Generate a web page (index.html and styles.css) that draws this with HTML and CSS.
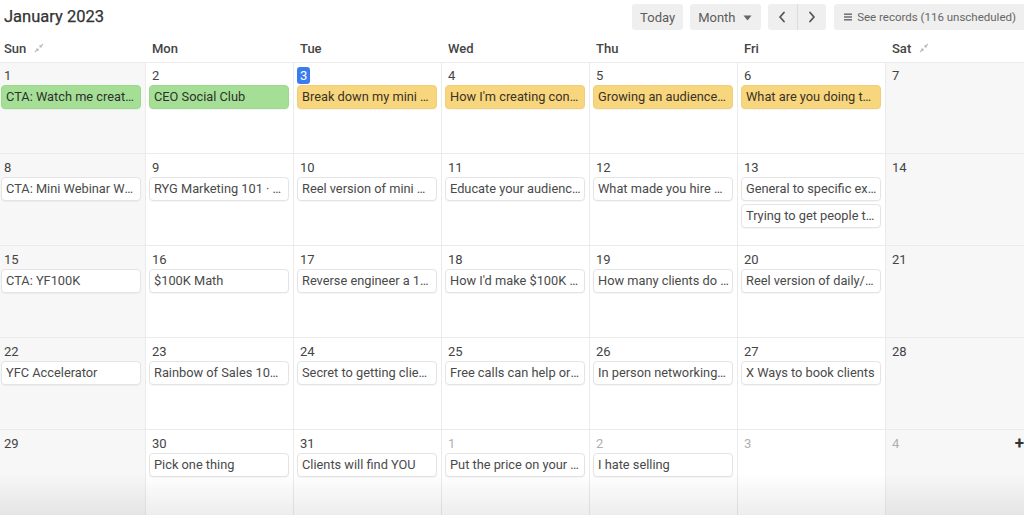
FILE: index.html
```html
<!DOCTYPE html>
<html lang="en">
<head>
<meta charset="utf-8">
<title>January 2023</title>
<link rel="stylesheet" href="styles.css">
</head>
<body>
<div class="app">
  <header class="toolbar">
    <h1 class="title">January 2023</h1>
    <div class="controls">
      <button class="btn btn-today">Today</button>
      <button class="btn btn-month">Month
        <svg class="caret" width="9" height="6" viewBox="0 0 9 6"><path d="M0.5 0.5 H8.5 L4.5 5.5 Z" fill="#666"/></svg>
      </button>
      <div class="nav">
        <button class="nav-btn" aria-label="Previous">
          <svg width="8" height="12" viewBox="0 0 8 12"><path d="M6 1.5 L2 6 L6 10.5" fill="none" stroke="#555" stroke-width="1.8" stroke-linecap="round" stroke-linejoin="round"/></svg>
        </button>
        <span class="nav-divider"></span>
        <button class="nav-btn" aria-label="Next">
          <svg width="8" height="12" viewBox="0 0 8 12"><path d="M2 1.5 L6 6 L2 10.5" fill="none" stroke="#555" stroke-width="1.8" stroke-linecap="round" stroke-linejoin="round"/></svg>
        </button>
      </div>
      <button class="btn btn-records">
        <svg class="list-icon" width="8" height="8" viewBox="0 0 8 8"><rect x="0" y="0.5" width="8" height="1.4" fill="#666"/><rect x="0" y="3.3" width="8" height="1.4" fill="#666"/><rect x="0" y="6.1" width="8" height="1.4" fill="#666"/></svg>
        See records (116 unscheduled)
      </button>
    </div>
  </header>

  <div class="weekdays">
    <div class="weekday">Sun <svg class="shrink" width="10" height="10" viewBox="0 0 10 10"><path d="M1 9 L4 6 M2 6 H4 V8 M9 1 L6 4 M6 2 V4 H8" fill="none" stroke="#bdbdbd" stroke-width="1.1"/></svg></div>
    <div class="weekday">Mon</div>
    <div class="weekday">Tue</div>
    <div class="weekday">Wed</div>
    <div class="weekday">Thu</div>
    <div class="weekday">Fri</div>
    <div class="weekday">Sat <svg class="shrink" width="10" height="10" viewBox="0 0 10 10"><path d="M1 9 L4 6 M2 6 H4 V8 M9 1 L6 4 M6 2 V4 H8" fill="none" stroke="#bdbdbd" stroke-width="1.1"/></svg></div>
  </div>

  <div class="grid">
    <!-- Week 1 -->
    <div class="cell weekend"><div class="date"><span class="num">1</span></div><div class="card green">CTA: Watch me create a mini webinar</div></div>
    <div class="cell"><div class="date"><span class="num">2</span></div><div class="card green">CEO Social Club</div></div>
    <div class="cell"><div class="date"><span class="num today">3</span></div><div class="card yellow">Break down my mini webinar</div></div>
    <div class="cell"><div class="date"><span class="num">4</span></div><div class="card yellow">How I'm creating content</div></div>
    <div class="cell"><div class="date"><span class="num">5</span></div><div class="card yellow">Growing an audience vs clients</div></div>
    <div class="cell"><div class="date"><span class="num">6</span></div><div class="card yellow">What are you doing this year</div></div>
    <div class="cell weekend"><div class="date"><span class="num">7</span></div></div>

    <!-- Week 2 -->
    <div class="cell weekend"><div class="date"><span class="num">8</span></div><div class="card">CTA: Mini Webinar Workshop</div></div>
    <div class="cell"><div class="date"><span class="num">9</span></div><div class="card">RYG Marketing 101 · Part 1</div></div>
    <div class="cell"><div class="date"><span class="num">10</span></div><div class="card">Reel version of mini webinar</div></div>
    <div class="cell"><div class="date"><span class="num">11</span></div><div class="card">Educate your audience first</div></div>
    <div class="cell"><div class="date"><span class="num">12</span></div><div class="card">What made you hire a coach</div></div>
    <div class="cell"><div class="date"><span class="num">13</span></div><div class="card">General to specific examples</div><div class="card">Trying to get people to buy</div></div>
    <div class="cell weekend"><div class="date"><span class="num">14</span></div></div>

    <!-- Week 3 -->
    <div class="cell weekend"><div class="date"><span class="num">15</span></div><div class="card">CTA: YF100K</div></div>
    <div class="cell"><div class="date"><span class="num">16</span></div><div class="card">$100K Math</div></div>
    <div class="cell"><div class="date"><span class="num">17</span></div><div class="card">Reverse engineer a 100K year</div></div>
    <div class="cell"><div class="date"><span class="num">18</span></div><div class="card">How I'd make $100K this year</div></div>
    <div class="cell"><div class="date"><span class="num">19</span></div><div class="card">How many clients do you need</div></div>
    <div class="cell"><div class="date"><span class="num">20</span></div><div class="card">Reel version of daily/weekly math</div></div>
    <div class="cell weekend"><div class="date"><span class="num">21</span></div></div>

    <!-- Week 4 -->
    <div class="cell weekend"><div class="date"><span class="num">22</span></div><div class="card">YFC Accelerator</div></div>
    <div class="cell"><div class="date"><span class="num">23</span></div><div class="card">Rainbow of Sales 101 · Part 1</div></div>
    <div class="cell"><div class="date"><span class="num">24</span></div><div class="card">Secret to getting clients</div></div>
    <div class="cell"><div class="date"><span class="num">25</span></div><div class="card">Free calls can help or hurt</div></div>
    <div class="cell"><div class="date"><span class="num">26</span></div><div class="card">In person networking events</div></div>
    <div class="cell"><div class="date"><span class="num">27</span></div><div class="card">X Ways to book clients</div></div>
    <div class="cell weekend"><div class="date"><span class="num">28</span></div></div>

    <!-- Week 5 -->
    <div class="cell weekend"><div class="date"><span class="num">29</span></div></div>
    <div class="cell"><div class="date"><span class="num">30</span></div><div class="card">Pick one thing</div></div>
    <div class="cell"><div class="date"><span class="num">31</span></div><div class="card">Clients will find YOU</div></div>
    <div class="cell"><div class="date"><span class="num other">1</span></div><div class="card">Put the price on your website</div></div>
    <div class="cell"><div class="date"><span class="num other">2</span></div><div class="card">I hate selling</div></div>
    <div class="cell"><div class="date"><span class="num other">3</span></div></div>
    <div class="cell weekend"><div class="date"><span class="num other">4</span><span class="add">+</span></div></div>
  </div>

  <div class="fade"></div>
</div>
</body>
</html>
```

FILE: styles.css
```css
* { box-sizing: border-box; }

html, body {
  margin: 0;
  padding: 0;
  background: #fff;
  overflow: hidden;
}

body {
  font-family: Roboto, "Liberation Sans", Arial, sans-serif;
  color: #333;
  font-size: 13px;
  width: 1024px;
  height: 515px;
}

.app {
  width: 1024px;
  height: 515px;
  overflow: hidden;
}

/* Toolbar */
.toolbar {
  height: 36px;
  display: flex;
  align-items: flex-start;
  justify-content: space-between;
  padding: 4px 0 0 4px;
}

.title {
  margin: 0;
  font-size: 16.5px;
  font-weight: 400;
  color: #333;
  line-height: 26px;
  -webkit-text-stroke: 0.25px #333;
}

.controls {
  display: flex;
  gap: 7px;
  margin-right: -6px;
  flex-shrink: 0;
}

.btn {
  height: 26px;
  border: 0;
  border-radius: 3px;
  background: #efefef;
  color: #5c5c5c;
  font-family: inherit;
  font-size: 13px;
  padding: 0;
  display: flex;
  align-items: center;
  cursor: pointer;
  white-space: nowrap;
  flex-shrink: 0;
}

.btn-today {
  width: 51px;
  justify-content: center;
}

.btn-month {
  width: 71px;
  padding-left: 8px;
  gap: 8px;
}

.caret { margin-top: 1px; }

.nav {
  display: flex;
  align-items: stretch;
  height: 26px;
  width: 58px;
  background: #efefef;
  border-radius: 3px;
  margin-right: 1px;
}

.nav-btn {
  flex: 1;
  border: 0;
  background: transparent;
  display: flex;
  align-items: center;
  justify-content: center;
  padding: 0;
}

.nav-divider {
  width: 1px;
  background: #dcdcdc;
}

.btn-records {
  font-size: 11.5px;
  color: #666;
  padding: 0 14px 0 10px;
  gap: 5px;
}

/* Weekday headers */
.weekdays {
  display: grid;
  grid-template-columns: repeat(7, 148px);
  margin-left: -2px;
  height: 26px;
  box-shadow: 0 1px 0 #ececec;
  position: relative;
}

.weekday {
  padding-left: 6px;
  line-height: 26px;
  font-size: 13px;
  font-weight: 500;
  color: #444;
  display: flex;
  align-items: center;
  gap: 8px;
}

.shrink { margin-top: -3px; }

/* Month grid */
.grid {
  display: grid;
  grid-template-columns: repeat(7, 148px);
  grid-auto-rows: 92px;
  margin-left: -2px;
}

.cell {
  border-right: 1px solid #ebebeb;
  border-bottom: 1px solid #ebebeb;
  padding: 4px 4px 0 3px;
  display: flex;
  flex-direction: column;
  gap: 3px;
  background: #fff;
}

.cell.weekend { background: #f7f7f7; }

.date {
  height: 18px;
  display: flex;
  align-items: center;
  justify-content: space-between;
  margin-bottom: -2px;
}

.num {
  padding: 0 3px;
  line-height: 17px;
  font-size: 13px;
  color: #444;
  border-radius: 3px;
}

.num.today {
  background: #3b7bf0;
  color: #fff;
}

.num.other { color: #b0b0b0; }

.add {
  font-size: 17px;
  font-weight: 700;
  color: #333;
  margin-right: 5px;
  line-height: 17px;
}

.card {
  height: 24px;
  line-height: 22px;
  padding: 0 3px 0 4px;
  border: 1px solid #e4e4e4;
  border-radius: 4px;
  background: #fff;
  color: #4a4a4a;
  font-size: 12.8px;
  white-space: nowrap;
  overflow: hidden;
  text-overflow: ellipsis;
  box-shadow: 0 1px 1px rgba(0, 0, 0, 0.04);
}

.card.green {
  background: #a5df96;
  border-color: #9cd98d;
  color: #2f2f2f;
}

.card.yellow {
  background: #f8d67e;
  border-color: #f1cf77;
  color: #3a3326;
}

/* Bottom fade overlay */
.fade {
  position: fixed;
  left: 0;
  bottom: 0;
  width: 1024px;
  height: 42px;
  background: linear-gradient(to bottom, rgba(0, 0, 0, 0), rgba(0, 0, 0, 0.07));
  pointer-events: none;
}
```
